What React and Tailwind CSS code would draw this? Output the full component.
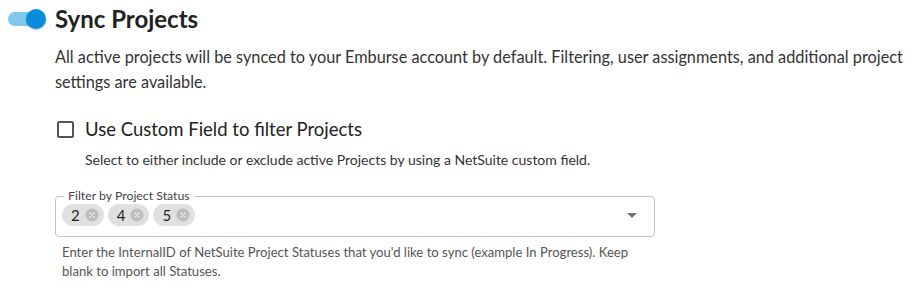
import React from "react";

function Chip({ label }) {
  return (
    <div className="flex h-[22px] items-center gap-[5px] rounded-full bg-[#e0e0e0] pl-[9px] pr-[5px] text-[15px] text-[#222]">
      <span>{label}</span>
      <svg width="14" height="14" viewBox="0 0 24 24">
        <circle cx="12" cy="12" r="11" fill="#bcbcbc" />
        <path d="M8 8l8 8M16 8l-8 8" stroke="#e0e0e0" strokeWidth="2.6" strokeLinecap="round" />
      </svg>
    </div>
  );
}

export default function App() {
  return (
    <div className="h-[291px] w-[921px] bg-white font-['Lato','Noto_Sans',sans-serif] text-[#333]">
      <div className="flex items-center pt-[4px]">
        <div className="relative ml-[8px] h-[14px] w-[34px] rounded-full bg-[#80c7ee]">
          <div className="absolute right-[-4px] top-[-3px] h-[20px] w-[20px] rounded-full bg-[#0a8cdc] shadow-[0_1px_2px_rgba(0,0,0,0.25)]" />
        </div>
        <h1 className="ml-[13px] text-[24px] font-bold leading-[30px] text-[#222]">Sync Projects</h1>
      </div>
      <p className="ml-[55px] mt-[10px] w-[860px] text-[16.3px] leading-[25px] text-[#333]">
        All active projects will be synced to your Emburse account by default. Filtering, user assignments, and additional project settings are available.
      </p>
      <div className="ml-[57px] mt-[23px] flex items-center">
        <div className="h-[17px] w-[17px] rounded-[2px] border-2 border-[#555]" />
        <span className="ml-[11px] text-[18.5px] leading-[24px] text-[#222]">Use Custom Field to filter Projects</span>
      </div>
      <p className="ml-[85px] mt-[9px] text-[14px] leading-[20px] text-[#333]">
        Select to either include or exclude active Projects by using a NetSuite custom field.
      </p>
      <fieldset className="ml-[55px] mt-[20px] h-[47px] w-[600px] rounded-[4px] border border-[#c4c4c4] px-[6px] pt-[2px]">
        <legend className="ml-[2px] px-[4px] text-[12.3px] leading-[12px] text-[#444]">Filter by Project Status</legend>
        <div className="flex items-center justify-between">
          <div className="flex gap-[4px]">
            <Chip label="2" />
            <Chip label="4" />
            <Chip label="5" />
          </div>
          <svg width="10" height="5" viewBox="0 0 10 5" className="mr-[11px]">
            <path d="M0 0h10L5 5z" fill="#707070" />
          </svg>
        </div>
      </fieldset>
      <p className="ml-[62px] mt-[6px] w-[580px] text-[13.1px] leading-[19px] text-[#555]">
        Enter the InternalID of NetSuite Project Statuses that you'd like to sync (example In Progress). Keep blank to import all Statuses.
      </p>
    </div>
  );
}
